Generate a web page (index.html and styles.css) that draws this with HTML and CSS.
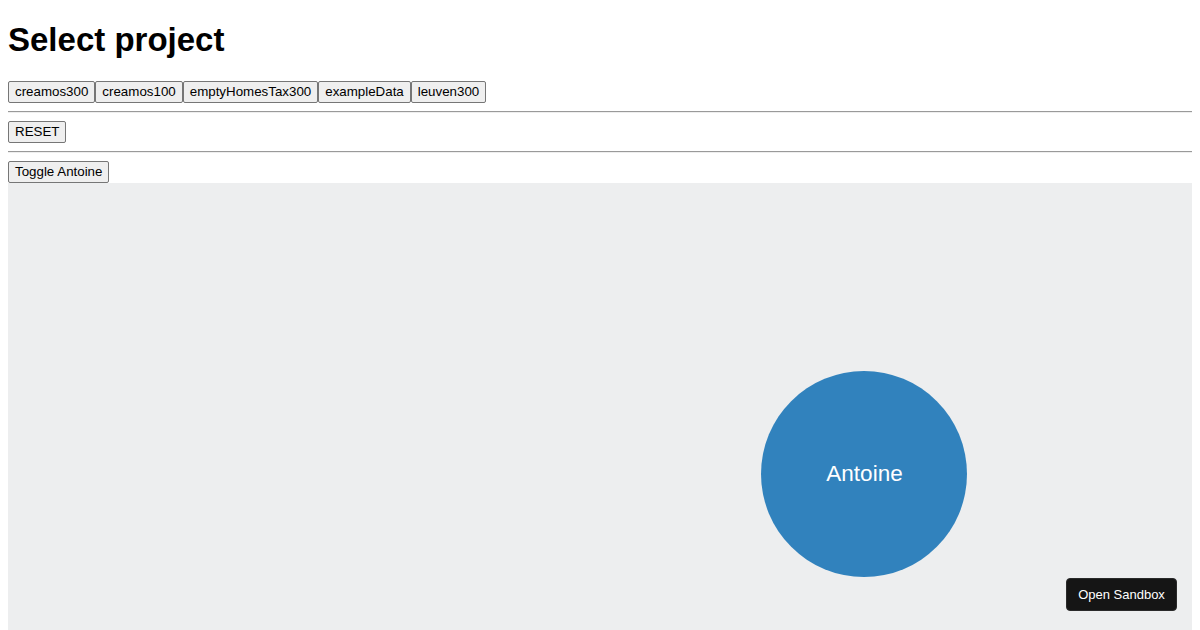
FILE: index.html
```html
<!DOCTYPE html>
<html>
<head>
<meta charset="utf-8">
<link rel="stylesheet" href="styles.css">
</head>
<body>
<h1 class="title">Select project</h1>
<div class="projects"><button class="btn">creamos300</button><button class="btn">creamos100</button><button class="btn">emptyHomesTax300</button><button class="btn">exampleData</button><button class="btn">leuven300</button></div>
<hr class="rule">
<div class="row"><button class="btn">RESET</button></div>
<hr class="rule">
<div class="row"><button class="btn">Toggle Antoine</button></div>
<div class="canvas">
  <svg class="chart" width="1184" height="460" viewBox="0 0 1184 460">
    <circle cx="856" cy="291" r="103" fill="#3182bd"></circle>
    <text x="856.5" y="298" text-anchor="middle" class="node-label">Antoine</text>
  </svg>
</div>
<button class="sandbox">Open Sandbox</button>
</body>
</html>
```
FILE: styles.css
```css
html {
  overflow: hidden;
}
body {
  margin: 8px;
  font-family: "Liberation Sans", Arial, sans-serif;
  background: #fff;
}
.title {
  font-size: 33px;
  font-weight: bold;
  margin: 13.44px 0 21.44px;
}
.projects, .row {
  display: flex;
}
.btn {
  font-family: "Liberation Sans", Arial, sans-serif;
  font-size: 13.333px;
  color: #000;
  background: #efefef;
  border: 1px solid #767676;
  border-radius: 2px;
  padding: 1px 6px;
  height: 22px;
  line-height: 18px;
  margin: 0;
}
.rule {
  margin: 8px 0;
  border: 0;
  border-top: 1px solid #9a9a9a;
  border-bottom: 1px solid #eeeeee;
  height: 0;
}
.canvas {
  background: #edeeef;
  height: 460px;
}
.chart {
  display: block;
}
.node-label {
  fill: #fff;
  font-family: "Liberation Sans", Arial, sans-serif;
  font-size: 22.5px;
}
.sandbox {
  position: fixed;
  right: 23px;
  bottom: 19px;
  width: 111px;
  height: 33px;
  background: #151515;
  color: #fff;
  border: 1px solid #2a2a2a;
  border-radius: 4px;
  font-family: "Liberation Sans", Arial, sans-serif;
  font-size: 13px;
  padding: 0;
}
```
